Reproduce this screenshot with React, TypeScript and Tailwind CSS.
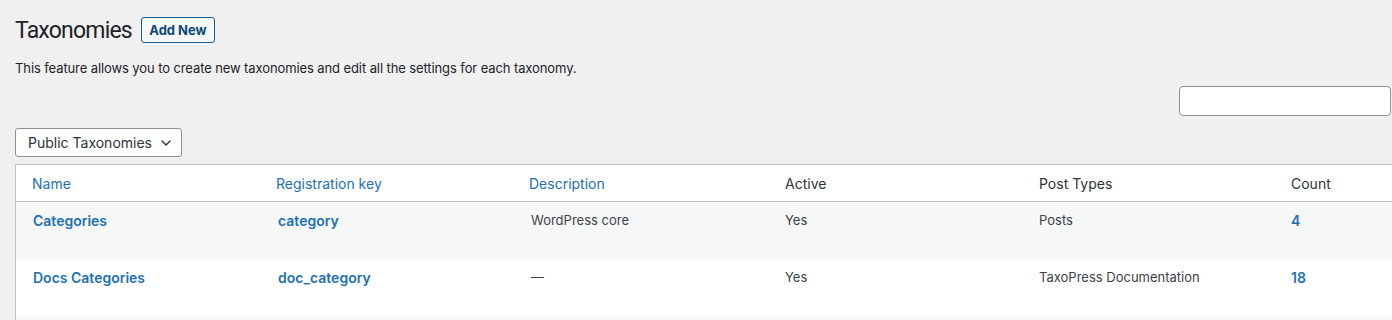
import React from "react";

const font = { fontFamily: 'Inter, "Noto Sans", Roboto, sans-serif' };

export default function App() {
  const cols = "grid grid-cols-[244px_253px_256px_254px_252px_1fr] pl-[6px]";
  const rows = [
    { name: "Categories", key: "category", desc: "WordPress core", active: "Yes", types: "Posts", count: "4", bg: "bg-[#f6f7f7]", h: "h-[57px]" },
    { name: "Docs Categories", key: "doc_category", desc: "—", active: "Yes", types: "TaxoPress Documentation", count: "18", bg: "bg-white", h: "h-[58px]" },
  ];
  return (
    <div className="min-h-[320px] w-full bg-[#f0f0f1] text-[#1d2327] overflow-hidden" style={font}>
      <div className="pl-[15px]">
        <div className="flex items-center pt-[17px] h-[43px]">
          <h1 className="text-[23px] leading-[26px] font-normal text-[#1d2327] mt-[2px] font-[Roboto,sans-serif] tracking-[-0.8px]">Taxonomies</h1>
          <button className="ml-[9px] h-[26px] w-[74px] border border-[#135e96] rounded-[3px] bg-[#f6f7f7] text-[13px] font-bold text-[#0a4b78] leading-[24px]">
            Add New
          </button>
        </div>
        <p className="mt-[17px] text-[13px] leading-[16px] text-[#1d2327] tracking-[-0.1px]">
          This feature allows you to create new taxonomies and edit all the settings for each taxonomy.
        </p>
        <div className="flex justify-end mt-[10px]">
          <input className="w-[212px] h-[30px] bg-white border border-[#8c8f94] rounded-[4px] mr-[1px]" />
        </div>
        <div className="mt-[12px]">
          <div className="w-[167px] h-[29px] bg-white border border-[#8c8f94] rounded-[3px] flex items-center justify-between pl-[12px] pr-[9px]">
            <span className="text-[14px] text-[#2c3338]">Public Taxonomies</span>
            <svg width="12" height="12" viewBox="0 0 12 12" fill="none">
              <path d="M2 4l4 4 4-4" stroke="#2c3338" strokeWidth="1.4" strokeLinecap="round" strokeLinejoin="round" />
            </svg>
          </div>
        </div>
        <div className="mt-[7px] border-l border-t border-[#c3c4c7] bg-white">
          <div className={`${cols} h-[37px] items-center border-b border-[#c3c4c7] text-[14px]`}>
            <div className="pl-[10px] text-[#2271b1]">Name</div>
            <div className="pl-[10px] text-[#2271b1]">Registration key</div>
            <div className="pl-[10px] text-[#2271b1]">Description</div>
            <div className="pl-[10px] text-[#2c3338]">Active</div>
            <div className="pl-[10px] text-[#2c3338]">Post Types</div>
            <div className="pl-[10px] text-[#2c3338]">Count</div>
          </div>
          {rows.map((r) => (
            <div key={r.key} className={`${cols} ${r.bg} ${r.h} items-start pt-[8px] text-[13px] leading-[21px]`}>
              <div className="pl-[11px] font-semibold text-[14px] leading-[21px] text-[#2271b1]">{r.name}</div>
              <div className="pl-[12px] font-semibold text-[14px] leading-[21px] text-[#2271b1]">{r.key}</div>
              <div className="pl-[12px] text-[#3c434a]">{r.desc}</div>
              <div className="pl-[10px] text-[#3c434a]">{r.active}</div>
              <div className="pl-[10px] text-[#3c434a]">{r.types}</div>
              <div className="pl-[10px] font-semibold text-[14px] leading-[21px] text-[#2271b1]">{r.count}</div>
            </div>
          ))}
          <div className={`${cols} bg-[#f6f7f7] h-[40px]`} />
        </div>
      </div>
    </div>
  );
}
